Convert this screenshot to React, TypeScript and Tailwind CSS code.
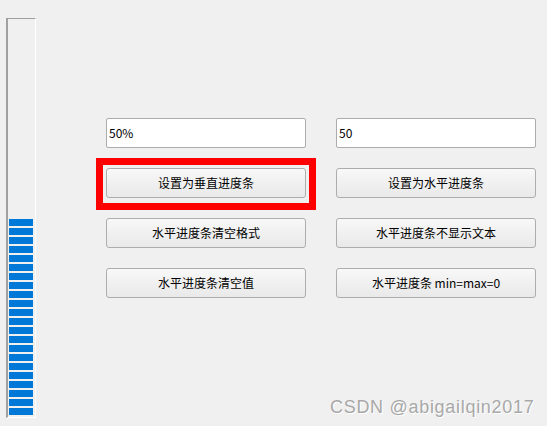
import React from "react";

const font = { fontFamily: '"Noto Sans CJK SC", "Noto Sans", sans-serif' };

function Btn({ children }: { children: React.ReactNode }) {
  return (
    <button
      className="h-[30px] w-[200px] rounded-[3px] border border-[#adadad] bg-gradient-to-b from-[#f8f8f8] to-[#e9e9e9] text-[12px] leading-none text-black"
      style={font}
    >
      {children}
    </button>
  );
}

function Field({ value }: { value: string }) {
  return (
    <div
      className="flex h-[30px] w-[200px] items-center rounded-[2px] border border-[#acacac] bg-white pl-[2px] text-[12px] text-black"
      style={font}
    >
      {value}
    </div>
  );
}

export default function App() {
  const chunks = Array.from({ length: 22 });
  return (
    <div className="relative flex h-[426px] w-[547px] overflow-hidden bg-[#f0f0f0]">
      <div className="ml-[6px] mt-[18px] flex h-[400px] w-[30px] flex-col justify-end gap-[2px] border-b border-l-2 border-r border-t border-b-white border-l-[#a0a0a0] border-r-white border-t-[#a0a0a0] pb-[2px] pl-[1px] pr-[2px]">
        {chunks.map((_, i) => (
          <div key={i} className="h-[7px] w-[24px] bg-[#0078d7]" />
        ))}
      </div>
      <div className="ml-[70px] mt-[118px] grid h-fit grid-cols-[200px_200px] gap-x-[30px] gap-y-[20px]">
        <Field value="50%" />
        <Field value="50" />
        <div className="relative">
          <Btn>设置为垂直进度条</Btn>
          <div className="absolute -left-[10px] -top-[10px] h-[52px] w-[220px] border-[7px] border-[#ff0000]" />
        </div>
        <Btn>设置为水平进度条</Btn>
        <Btn>水平进度条清空格式</Btn>
        <Btn>水平进度条不显示文本</Btn>
        <Btn>水平进度条清空值</Btn>
        <Btn>水平进度条 min=max=0</Btn>
      </div>
      <div
        className="absolute left-[330px] top-[398px] text-[18px] leading-[18px] tracking-[0.7px] text-[#a8a8a8] [text-shadow:1px_1px_0_#ffffff]"
        style={{ fontFamily: '"Liberation Sans", Arial, sans-serif' }}
      >
        CSDN @abigailqin2017
      </div>
    </div>
  );
}
